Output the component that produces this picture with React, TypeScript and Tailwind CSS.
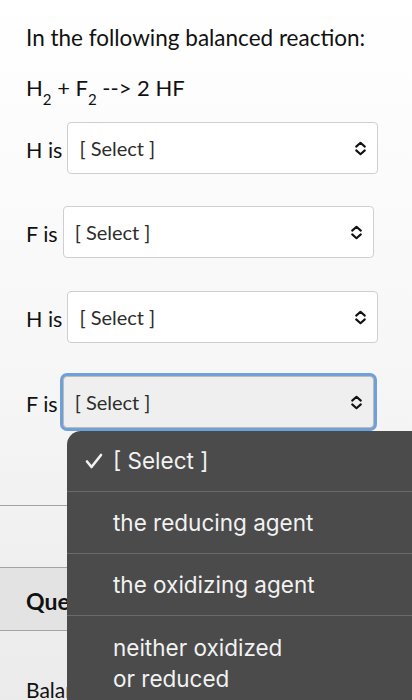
import React from "react";

function Chevrons() {
  return (
    <svg width="13" height="15" viewBox="0 0 13 15" fill="none" stroke="#111" strokeWidth="2.1" strokeLinecap="round" strokeLinejoin="round">
      <path d="M2.2 5.6 L6.5 1.8 L10.8 5.6" />
      <path d="M2.2 9.4 L6.5 13.2 L10.8 9.4" />
    </svg>
  );
}

function Row({ label, focused = false, mt }: { label: string; focused?: boolean; mt: string }) {
  return (
    <div className={`flex items-center ${mt}`}>
      <span className="text-[21.5px] text-[#111] mt-[6px] leading-none">{label}</span>
      <div
        className={`ml-[5px] w-[311px] h-[52px] rounded-[4px] flex items-center justify-between pl-[11px] pr-[10px] ${
          focused
            ? "bg-[#efefef] border border-[#bbb] ring-[3px] ring-[#6fa0d8]"
            : "bg-white border border-[#cfcfcf]"
        }`}
      >
        <span className="text-[20px] text-[#2d2d2d]">[ Select ]</span>
        <Chevrons />
      </div>
    </div>
  );
}

export default function App() {
  return (
    <div
      className="relative w-[412px] h-[700px] overflow-hidden bg-gradient-to-b from-white via-[#f7f7f7] to-[#ebebeb]"
      style={{ fontFamily: "Lato, 'Open Sans', sans-serif" }}
    >
      <div className="pl-[26px] pt-[22px]">
        <p className="text-[22.5px] leading-[32px] text-[#111]">In the following balanced reaction:</p>
        <p className="mt-[18px] text-[22px] leading-[32px] text-[#111]">
          H<sub className="text-[15px] align-[-5px]">2</sub> + F<sub className="text-[15px] align-[-5px]">2</sub> --&gt; 2 HF
        </p>
        <Row label="H is" mt="mt-[18px]" />
        <Row label="F is" mt="mt-[32px]" />
        <Row label="H is" mt="mt-[33px]" />
        <Row label="F is" mt="mt-[33px]" focused />
      </div>

      <div className="mt-[77px]">
        <div className="h-px bg-[#a3a3a3]" />
        <div className="h-[61px]" />
        <div className="h-px bg-[#a3a3a3]" />
        <div className="h-[62px] bg-[#e3e3e3] flex items-center pl-[26px] pt-[4px]">
          <span className="text-[23px] font-bold text-[#111]">Question</span>
        </div>
        <div className="h-px bg-[#a3a3a3]" />
        <div className="pl-[26px] pt-[43px] text-[21px] text-[#111]">Balanced</div>
      </div>

      <div
        className="absolute left-[67px] top-[431px] w-[360px] h-[300px] bg-[#4b4b4b] rounded-tl-[14px] text-[#f2f2f2]"
        style={{ fontFamily: "Inter, 'Open Sans', sans-serif" }}
      >
        <div className="h-[61px] flex items-center border-b border-[#6b6b6b]">
          <span className="w-[46px] pl-[18px] flex items-center">
            <svg width="18" height="16" viewBox="0 0 18 16" fill="none" stroke="#f2f2f2" strokeWidth="2.6" strokeLinecap="round" strokeLinejoin="round">
              <path d="M2 8.5 L6.5 14 L16 2" />
            </svg>
          </span>
          <span className="text-[22.5px]">[ Select ]</span>
        </div>
        <div className="h-[62px] flex items-center pl-[46px] border-b border-[#6b6b6b]">
          <span className="text-[22.5px]">the reducing agent</span>
        </div>
        <div className="h-[62px] flex items-center pl-[46px] border-b border-[#6b6b6b]">
          <span className="text-[22.5px]">the oxidizing agent</span>
        </div>
        <div className="pl-[46px] pt-[16px] text-[22.5px] leading-[31px]">
          neither oxidized
          <br />
          or reduced
        </div>
      </div>
    </div>
  );
}
